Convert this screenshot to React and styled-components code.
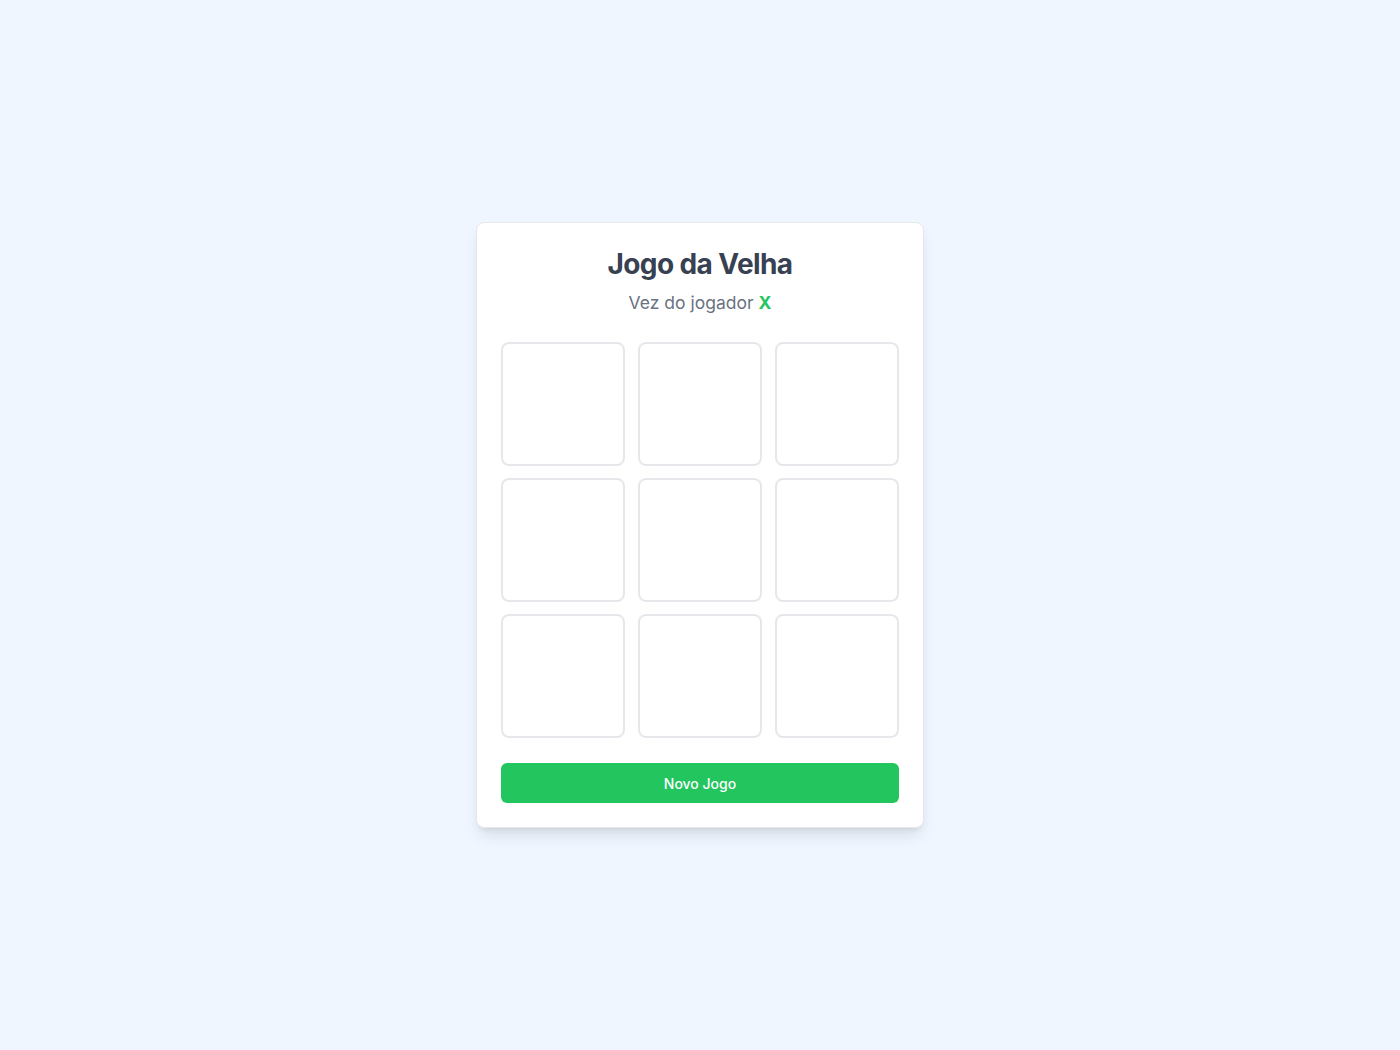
import React, { useState } from "react";
import styled, { createGlobalStyle } from "styled-components";

const GlobalStyle = createGlobalStyle`
  * { box-sizing: border-box; }
  body {
    margin: 0;
    font-family: "Inter", "Noto Sans", sans-serif;
    background: #eff6ff;
  }
`;

const Page = styled.div`
  min-height: 100vh;
  display: flex;
  align-items: center;
  justify-content: center;
`;

const Card = styled.div`
  width: 448px;
  background: #fff;
  border: 1px solid #e5e7eb;
  border-radius: 8px;
  padding: 23px 24px 24px;
  box-shadow: 0 10px 15px -3px rgba(0, 0, 0, 0.1), 0 4px 6px -4px rgba(0, 0, 0, 0.1);
  display: flex;
  flex-direction: column;
`;

const Title = styled.h1`
  margin: 0 0 7px;
  text-align: center;
  font-size: 28px;
  line-height: 36px;
  font-weight: 700;
  letter-spacing: -0.6px;
  color: #374151;
`;

const Status = styled.p`
  margin: 0 0 25px;
  text-align: center;
  font-size: 17.5px;
  line-height: 28px;
  color: #6b7280;
`;

const Player = styled.span`
  font-weight: 700;
  color: #22c55e;
`;

const Board = styled.div`
  display: grid;
  grid-template-columns: repeat(3, 1fr);
  gap: 12px 13px;
`;

const Cell = styled.button`
  height: 124px;
  background: #fff;
  border: 2px solid #e5e7eb;
  border-radius: 8px;
  font-family: inherit;
  font-size: 48px;
  font-weight: 700;
  color: ${(p) => (p.$value === "X" ? "#22c55e" : "#ef4444")};
  cursor: pointer;
  padding: 0;
`;

const ResetButton = styled.button`
  margin-top: 25px;
  height: 40px;
  border: none;
  border-radius: 6px;
  background: #22c55e;
  color: #fff;
  font-family: inherit;
  font-size: 14px;
  font-weight: 500;
  cursor: pointer;
`;

export default function App() {
  const [cells, setCells] = useState(Array(9).fill(null));
  const [turn, setTurn] = useState("X");

  const play = (i) => {
    if (cells[i]) return;
    const next = [...cells];
    next[i] = turn;
    setCells(next);
    setTurn(turn === "X" ? "O" : "X");
  };

  return (
    <>
      <GlobalStyle />
      <Page>
        <Card>
          <Title>Jogo da Velha</Title>
          <Status>
            Vez do jogador <Player>{turn}</Player>
          </Status>
          <Board>
            {cells.map((c, i) => (
              <Cell key={i} $value={c} onClick={() => play(i)}>
                {c}
              </Cell>
            ))}
          </Board>
          <ResetButton
            onClick={() => {
              setCells(Array(9).fill(null));
              setTurn("X");
            }}
          >
            Novo Jogo
          </ResetButton>
        </Card>
      </Page>
    </>
  );
}
